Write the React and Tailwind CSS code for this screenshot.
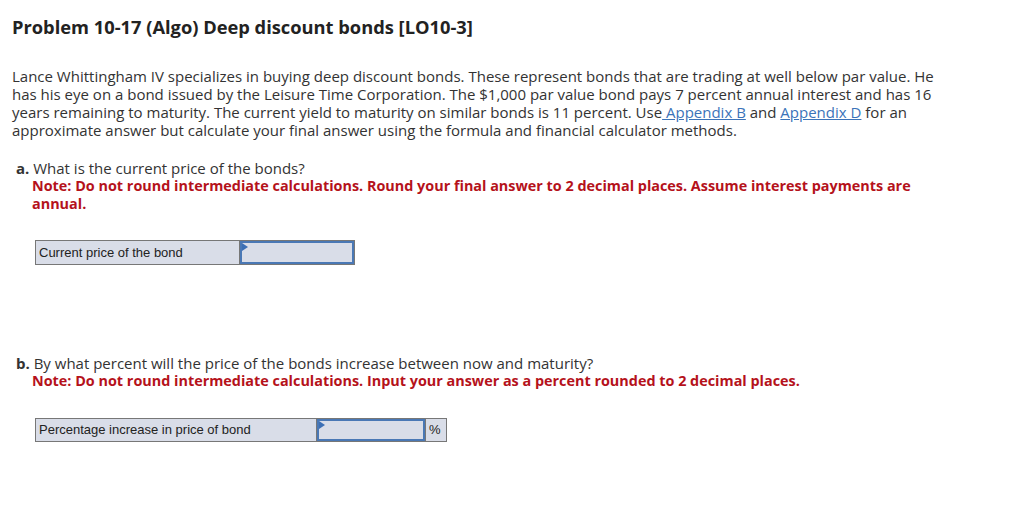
export default function App() {
  return (
    <div className="w-[1026px] h-[510px] bg-white text-[#333] font-['Open_Sans',sans-serif]">
      <div className="px-3 pt-[14px]">
        <h1 className="text-[18.3px] font-bold leading-[26px] text-[#222]">
          Problem 10-17 (Algo) Deep discount bonds [LO10-3]
        </h1>

        <p className="mt-[27px] text-[15px] leading-[18px]">
          Lance Whittingham IV specializes in buying deep discount bonds. These represent bonds that are
          trading at well below par value. He
          <br />
          has his eye on a bond issued by the Leisure Time Corporation. The $1,000 par value bond pays 7
          percent annual interest and has 16
          <br />
          years remaining to maturity. The current yield to maturity on similar bonds is 11 percent. Use
          <a className="text-[#3b73b9] underline"> Appendix B</a> and{' '}
          <a className="text-[#3b73b9] underline">Appendix D</a> for an
          <br />
          approximate answer but calculate your final answer using the formula and financial calculator methods.
        </p>

        <div className="mt-[20px] pl-[4px] text-[15px] leading-[18px]">
          <p>
            <span className="font-bold">a.</span> What is the current price of the bonds?
          </p>
          <p className="pl-[16px] font-bold text-[#b5121b] text-[14.4px]">
            Note: Do not round intermediate calculations. Round your final answer to 2 decimal places. Assume
            interest payments are
            <br />
            annual.
          </p>
        </div>

        <div className="mt-[27px] ml-[23px] flex w-[320px] h-[25px] border border-[#777] bg-[#d9dde8] font-['Liberation_Sans',Arial,sans-serif] text-[13px] text-[#222]">
          <div className="w-[204px] border-r border-[#777] pl-[3px] flex items-center">Current price of the bond</div>
          <div className="relative flex-1 border-2 border-[#4a78b5]">
            <div className="absolute left-0 top-0 w-0 h-0 border-t-[4px] border-b-[4px] border-l-[6px] border-t-transparent border-b-transparent border-l-[#3c6fb5]" />
          </div>
        </div>

        <div className="mt-[89px] pl-[4px] text-[15px] leading-[18px]">
          <p>
            <span className="font-bold">b.</span> By what percent will the price of the bonds increase between
            now and maturity?
          </p>
          <p className="pl-[16px] font-bold text-[#b5121b] text-[14.4px]">
            Note: Do not round intermediate calculations. Input your answer as a percent rounded to 2 decimal places.
          </p>
        </div>

        <div className="mt-[28px] ml-[23px] flex w-[412px] h-[24px] border border-[#777] bg-[#d9dde8] font-['Liberation_Sans',Arial,sans-serif] text-[13px] text-[#222]">
          <div className="w-[281px] border-r border-[#777] pl-[3px] flex items-center">Percentage increase in price of bond</div>
          <div className="relative w-[108px] border-2 border-[#4a78b5]">
            <div className="absolute left-0 top-0 w-0 h-0 border-t-[4px] border-b-[4px] border-l-[6px] border-t-transparent border-b-transparent border-l-[#3c6fb5]" />
          </div>
          <div className="flex-1 border-l border-[#777] flex items-center pl-[3px]">%</div>
        </div>
      </div>
    </div>
  );
}
